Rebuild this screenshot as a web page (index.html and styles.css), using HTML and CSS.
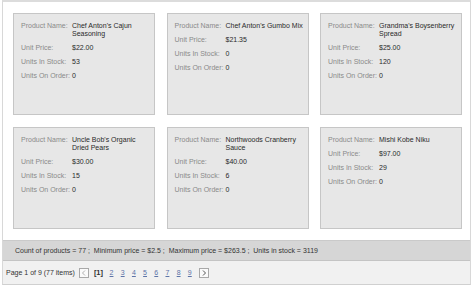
FILE: index.html
```html
<!DOCTYPE html>
<html lang="en">
<head>
  <meta charset="UTF-8" />
  <title>Products</title>
  <link rel="stylesheet" href="styles.css">
</head>
<body>

<div class="view">
  <!-- CARDS -->
  <div class="cards">
    <div class="card">
      <span class="lbl">Product Name:</span><span class="val">Chef Anton's Cajun Seasoning</span>
      <span class="lbl">Unit Price:</span><span class="val">$22.00</span>
      <span class="lbl">Units In Stock:</span><span class="val">53</span>
      <span class="lbl">Units On Order:</span><span class="val">0</span>
    </div>
    <div class="card">
      <span class="lbl">Product Name:</span><span class="val">Chef Anton's Gumbo Mix</span>
      <span class="lbl">Unit Price:</span><span class="val">$21.35</span>
      <span class="lbl">Units In Stock:</span><span class="val">0</span>
      <span class="lbl">Units On Order:</span><span class="val">0</span>
    </div>
    <div class="card">
      <span class="lbl">Product Name:</span><span class="val">Grandma's Boysenberry Spread</span>
      <span class="lbl">Unit Price:</span><span class="val">$25.00</span>
      <span class="lbl">Units In Stock:</span><span class="val">120</span>
      <span class="lbl">Units On Order:</span><span class="val">0</span>
    </div>
    <div class="card">
      <span class="lbl">Product Name:</span><span class="val">Uncle Bob's Organic Dried Pears</span>
      <span class="lbl">Unit Price:</span><span class="val">$30.00</span>
      <span class="lbl">Units In Stock:</span><span class="val">15</span>
      <span class="lbl">Units On Order:</span><span class="val">0</span>
    </div>
    <div class="card">
      <span class="lbl">Product Name:</span><span class="val">Northwoods Cranberry Sauce</span>
      <span class="lbl">Unit Price:</span><span class="val">$40.00</span>
      <span class="lbl">Units In Stock:</span><span class="val">6</span>
      <span class="lbl">Units On Order:</span><span class="val">0</span>
    </div>
    <div class="card">
      <span class="lbl">Product Name:</span><span class="val">Mishi Kobe Niku</span>
      <span class="lbl">Unit Price:</span><span class="val">$97.00</span>
      <span class="lbl">Units In Stock:</span><span class="val">29</span>
      <span class="lbl">Units On Order:</span><span class="val">0</span>
    </div>
  </div>

  <!-- SUMMARY -->
  <div class="summary">Count of products = 77 ;&nbsp; Minimum price = $2.5 ;&nbsp; Maximum price = $263.5 ;&nbsp; Units in stock = 3119</div>

  <!-- PAGER -->
  <div class="pager">
    <span class="info">Page 1 of 9 (77 items)</span>
    <span class="arrow">
      <svg width="6" height="6" viewBox="0 0 6 6"><path d="M4 0.5 L1.5 3 L4 5.5" fill="none" stroke="#b0b0b0" stroke-width="1"/></svg>
    </span>
    <span class="current">[1]</span>
    <a href="#" class="first">2</a>
    <a href="#">3</a>
    <a href="#">4</a>
    <a href="#">5</a>
    <a href="#">6</a>
    <a href="#">7</a>
    <a href="#">8</a>
    <a href="#">9</a>
    <span class="arrow">
      <svg width="6" height="6" viewBox="0 0 6 6"><path d="M2 0.5 L4.5 3 L2 5.5" fill="none" stroke="#555" stroke-width="1"/></svg>
    </span>
  </div>
</div>

</body>
</html>
```

FILE: styles.css
```css
body {
  margin: 0;
  background: #fff;
  font-family: "Liberation Sans", Arial, sans-serif;
  font-size: 7px;
  color: #333;
}

.view {
  margin-left: 2px;
  width: 467px;
  border: 1px solid #d8d8d8;
  border-top: 2px solid #dcdcdc;
  border-bottom: 1px solid #d0d0d0;
}

.cards {
  display: grid;
  grid-template-columns: repeat(3, 142px);
  grid-auto-rows: 102px;
  column-gap: 11.5px;
  row-gap: 12px;
  padding: 11px 0 11px 10px;
}

.card {
  box-sizing: border-box;
  background: #e7e7e7;
  border: 1px solid #c6c6c6;
  padding: 8px 2px 0 7px;
  display: grid;
  grid-template-columns: 51px 1fr;
  row-gap: 6px;
  align-content: start;
  line-height: 8px;
}

.lbl {
  color: #8a8a8a;
  white-space: nowrap;
}

.val {
  color: #2a2a2a;
}

.summary {
  background: #d6d6d6;
  border-top: 1px solid #cacaca;
  border-bottom: 1px solid #c4c4c4;
  height: 19px;
  line-height: 19px;
  padding-left: 12px;
}

.pager {
  background: #f1f1f1;
  height: 23px;
  display: flex;
  align-items: center;
  padding-left: 3px;
  gap: 4.5px;
}

.arrow {
  box-sizing: border-box;
  width: 10px;
  height: 10px;
  border: 1px solid #a8a8a8;
  background: #fafafa;
  display: flex;
  align-items: center;
  justify-content: center;
}

.current {
  font-weight: bold;
  font-size: 7.5px;
}

.pager a {
  color: #5d74a8;
  text-decoration: underline;
  width: 6.7px;
}

.pager a.first {
  margin-left: 2px;
}
```
